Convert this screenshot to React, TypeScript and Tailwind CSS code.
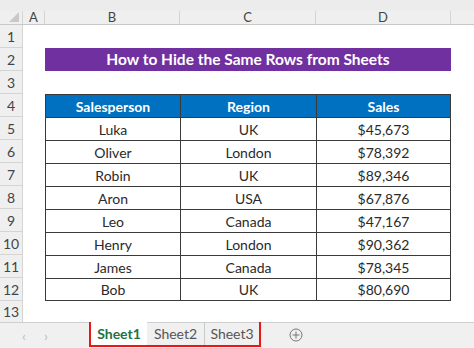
import React from "react";

const data = [
  ["Luka", "UK", "$45,673"],
  ["Oliver", "London", "$78,392"],
  ["Robin", "UK", "$89,346"],
  ["Aron", "USA", "$67,876"],
  ["Leo", "Canada", "$47,167"],
  ["Henry", "London", "$90,362"],
  ["James", "Canada", "$78,345"],
  ["Bob", "UK", "$80,690"],
];

function RowHead({ n }: { n: number }) {
  return (
    <div className="w-[23px] h-[23px] shrink-0 bg-[#efefef] border-r border-b border-[#d4d4d4] flex items-center justify-center text-[14px] text-[#444]">
      {n}
    </div>
  );
}

export default function App() {
  const font = { fontFamily: "Lato, 'Open Sans', 'Liberation Sans', sans-serif" };
  return (
    <div className="w-[474px] h-[348px] overflow-hidden bg-white flex flex-col" style={font}>
      <div className="h-[11px] bg-[#ececec] shrink-0" />
      <div className="flex h-[14px] shrink-0 bg-[#efefef] border-b border-[#c8c8c8] text-[13px] text-[#444]">
        <div className="w-[23px] border-r border-[#d4d4d4] relative">
          <svg width="10" height="10" className="absolute right-[3px] bottom-[2px]" viewBox="0 0 10 10">
            <polygon points="10,0 10,10 0,10" fill="#c8c8c8" />
          </svg>
        </div>
        <div className="w-[22px] border-r border-[#d4d4d4] flex items-center justify-center">A</div>
        <div className="w-[135px] border-r border-[#d4d4d4] flex items-center justify-center">B</div>
        <div className="w-[136px] border-r border-[#d4d4d4] flex items-center justify-center">C</div>
        <div className="w-[135px] border-r border-[#d4d4d4] flex items-center justify-center">D</div>
        <div className="flex-1" />
      </div>
      <div className="flex">
        <RowHead n={1} />
      </div>
      <div className="flex">
        <RowHead n={2} />
        <div className="w-[22px]" />
        <div className="w-[406px] h-[23px] bg-[#7030a0] text-white font-bold text-[15.5px] flex items-center justify-center">
          How to Hide the Same Rows from Sheets
        </div>
      </div>
      <div className="flex">
        <RowHead n={3} />
      </div>
      <div className="flex">
        <RowHead n={4} />
        <div className="w-[22px]" />
        <div className="flex h-[23px] bg-[#0070c0] text-white font-bold text-[14px] border border-b-0 border-[#3a3a3a]">
          <div className="w-[135px] border-r border-[#3a3a3a] flex items-center justify-center">Salesperson</div>
          <div className="w-[136px] border-r border-[#3a3a3a] flex items-center justify-center">Region</div>
          <div className="w-[133px] flex items-center justify-center">Sales</div>
        </div>
      </div>
      {data.map((r, i) => (
        <div className="flex" key={i}>
          <RowHead n={5 + i} />
          <div className="w-[22px]" />
          <div className={`flex h-[23px] text-[14px] text-[#2a2a2a] border border-[#3a3a3a] ${i === data.length - 1 ? "" : "border-b-0"}`}>
            <div className="w-[135px] border-r border-[#3a3a3a] flex items-center justify-center">{r[0]}</div>
            <div className="w-[136px] border-r border-[#3a3a3a] flex items-center justify-center">{r[1]}</div>
            <div className="w-[133px] flex items-center justify-center">{r[2]}</div>
          </div>
        </div>
      ))}
      <div className="flex">
        <div className="w-[23px] h-[21px] shrink-0 bg-[#efefef] border-r border-[#d4d4d4] flex items-center justify-center text-[14px] text-[#444]">13</div>
      </div>
      <div className="flex-1 bg-[#f0f0f0] border-t border-[#cfcfcf] flex items-start text-[14px]">
        <div className="w-[89px] flex items-center h-[24px] pl-[22px] gap-[18px] text-[#bdbdbd] text-[14px]">
          <span>‹</span>
          <span>›</span>
        </div>
        <div className="flex h-[25px] border-2 border-[#e81818] border-t-0 -mt-px">
          <div className="w-[56px] bg-white flex items-center justify-center font-bold text-[#217346]">Sheet1</div>
          <div className="w-[58px] flex items-center justify-center text-[#555] border-r border-[#c8c8c8]">Sheet2</div>
          <div className="w-[54px] flex items-center justify-center text-[#555]">Sheet3</div>
        </div>
        <div className="ml-[28px] h-[24px] flex items-center">
          <svg width="14" height="14" viewBox="0 0 14 14">
            <circle cx="7" cy="7" r="6" fill="none" stroke="#777" strokeWidth="1" />
            <line x1="7" y1="3.5" x2="7" y2="10.5" stroke="#777" strokeWidth="1" />
            <line x1="3.5" y1="7" x2="10.5" y2="7" stroke="#777" strokeWidth="1" />
          </svg>
        </div>
      </div>
    </div>
  );
}
